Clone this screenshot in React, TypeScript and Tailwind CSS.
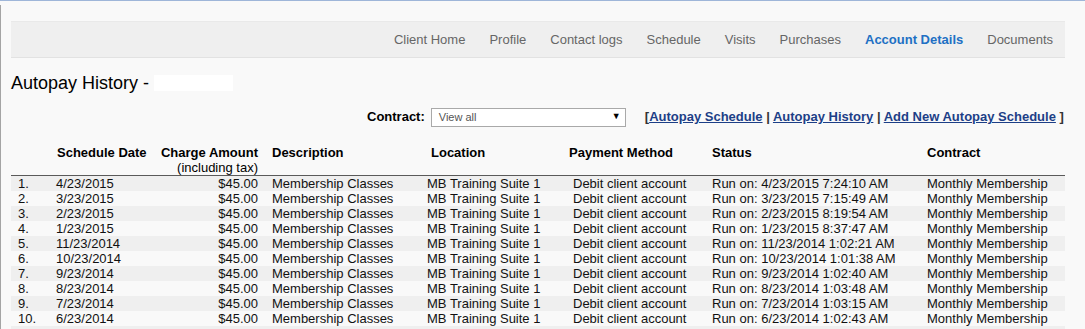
import React from 'react';

type Row = {
  date: string;
  amount: string;
  description: string;
  location: string;
  method: string;
  runOn: string;
  contract: string;
};

const rows: Row[] = [
  { date: '4/23/2015', amount: '$45.00', description: 'Membership Classes', location: 'MB Training Suite 1', method: 'Debit client account', runOn: '4/23/2015 7:24:10 AM', contract: 'Monthly Membership' },
  { date: '3/23/2015', amount: '$45.00', description: 'Membership Classes', location: 'MB Training Suite 1', method: 'Debit client account', runOn: '3/23/2015 7:15:49 AM', contract: 'Monthly Membership' },
  { date: '2/23/2015', amount: '$45.00', description: 'Membership Classes', location: 'MB Training Suite 1', method: 'Debit client account', runOn: '2/23/2015 8:19:54 AM', contract: 'Monthly Membership' },
  { date: '1/23/2015', amount: '$45.00', description: 'Membership Classes', location: 'MB Training Suite 1', method: 'Debit client account', runOn: '1/23/2015 8:37:47 AM', contract: 'Monthly Membership' },
  { date: '11/23/2014', amount: '$45.00', description: 'Membership Classes', location: 'MB Training Suite 1', method: 'Debit client account', runOn: '11/23/2014 1:02:21 AM', contract: 'Monthly Membership' },
  { date: '10/23/2014', amount: '$45.00', description: 'Membership Classes', location: 'MB Training Suite 1', method: 'Debit client account', runOn: '10/23/2014 1:01:38 AM', contract: 'Monthly Membership' },
  { date: '9/23/2014', amount: '$45.00', description: 'Membership Classes', location: 'MB Training Suite 1', method: 'Debit client account', runOn: '9/23/2014 1:02:40 AM', contract: 'Monthly Membership' },
  { date: '8/23/2014', amount: '$45.00', description: 'Membership Classes', location: 'MB Training Suite 1', method: 'Debit client account', runOn: '8/23/2014 1:03:48 AM', contract: 'Monthly Membership' },
  { date: '7/23/2014', amount: '$45.00', description: 'Membership Classes', location: 'MB Training Suite 1', method: 'Debit client account', runOn: '7/23/2014 1:03:15 AM', contract: 'Monthly Membership' },
  { date: '6/23/2014', amount: '$45.00', description: 'Membership Classes', location: 'MB Training Suite 1', method: 'Debit client account', runOn: '6/23/2014 1:02:43 AM', contract: 'Monthly Membership' },
  { date: '6/17/2014', amount: '$30.00', description: 'Membership Classes', location: 'MB Training Suite 1', method: 'Debit client account', runOn: '6/17/2014 1:30:49 AM', contract: 'Add-on Membership' },
];

const navItems = ['Client Home', 'Profile', 'Contact logs', 'Schedule', 'Visits', 'Purchases', 'Account Details', 'Documents'];

const cols = 'grid grid-cols-[45px_104px_98px_169px_142px_143px_215px_138px]';

export default function App() {
  return (
    <div className="min-h-screen bg-[#f9f9f9] font-['Liberation_Sans',Arial,sans-serif] text-[13px] text-[#111]">
      <div className="h-px bg-[#9fb6d9]" />
      <div className="mt-[4px] border-l border-[#a4a4a4] pl-[10px] pr-[20px] pt-[16px]">
        {/* top tabs */}
        <div className="flex h-[37px] items-center justify-end border-t border-b border-t-[#e9e9e9] border-b-[#e2e2e2] bg-[#efefef]">
          {navItems.map((item) => (
            <span
              key={item}
              className={
                item === 'Account Details'
                  ? 'px-3 font-bold text-[#2170c4]'
                  : 'px-3 text-[#666]'
              }
            >
              {item}
            </span>
          ))}
        </div>

        <div className="mt-[15px] flex h-[20px] items-center">
          <h1 className="text-[18px] leading-[20px] text-black">Autopay History -</h1>
          <div className="ml-[5px] h-[16px] w-[79px] bg-white" />
        </div>

        {/* filter + links */}
        <div className="mt-[14px] flex h-[20px] items-center pl-[356px]">
          <span className="font-bold text-black">Contract:</span>
          <div className="ml-[6px] flex h-[19px] w-[195px] items-center justify-between border border-[#a9a9a9] bg-white pl-[7px] pr-[4px]">
            <span className="text-[11px] text-[#555]">View all</span>
            <span className="text-[9px] text-black">▼</span>
          </div>
          <div className="ml-[19px] whitespace-pre font-bold text-[#333]">
            [<a className="text-[#1d3f87] underline">Autopay Schedule</a> | <a className="text-[#1d3f87] underline">Autopay History</a> | <a className="text-[#1d3f87] underline">Add New Autopay Schedule</a> ]
          </div>
        </div>

        {/* table */}
        <div className="mt-[18px] leading-[15px]">
          <div className={`${cols} border-b border-[#5a5a5a] font-bold text-black`}>
            <div />
            <div className="pl-[1px]">Schedule Date</div>
            <div className="text-right">
              Charge Amount
              <div className="h-[15px] font-normal">(including tax)</div>
            </div>
            <div className="pl-[14px]">Description</div>
            <div className="pl-[4px]">Location</div>
            <div>Payment Method</div>
            <div>Status</div>
            <div>Contract</div>
          </div>
          {rows.map((r, i) => (
            <div key={i} className={`${cols} h-[15px] ${i % 2 === 0 ? 'bg-[#efefef]' : 'bg-[#f9f9f9]'}`}>
              <div className="pl-[7px]">{i + 1}.</div>
              <div>{r.date}</div>
              <div className="text-right">{r.amount}</div>
              <div className="pl-[14px]">{r.description}</div>
              <div>{r.location}</div>
              <div className="pl-[4px]">{r.method}</div>
              <div>Run on: {r.runOn}</div>
              <div>{r.contract}</div>
            </div>
          ))}
        </div>
      </div>
    </div>
  );
}
